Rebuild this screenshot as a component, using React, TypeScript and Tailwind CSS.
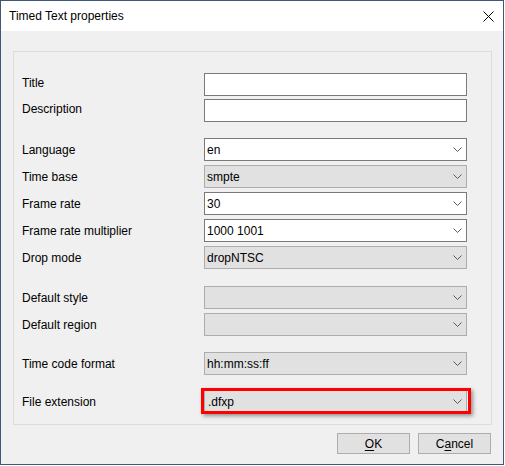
import type { ReactNode } from "react";

const FONT = { fontFamily: '"Liberation Sans", Arial, sans-serif' };

type FieldKind = "text" | "combo" | "readonly";

interface Field {
  label: string;
  kind: FieldKind;
  value?: string;
}

// Sections of the group box, spacing between them taken from the dialog
const SECTIONS: { gapTop: number; fields: Field[]; tight?: boolean }[] = [
  {
    gapTop: 21,
    tight: true,
    fields: [
      { label: "Title", kind: "text" },
      { label: "Description", kind: "text" },
    ],
  },
  {
    gapTop: 16,
    fields: [
      { label: "Language", kind: "combo", value: "en" },
      { label: "Time base", kind: "readonly", value: "smpte" },
      { label: "Frame rate", kind: "combo", value: "30" },
      { label: "Frame rate multiplier", kind: "combo", value: "1000 1001" },
      { label: "Drop mode", kind: "readonly", value: "dropNTSC" },
    ],
  },
  {
    gapTop: 17,
    fields: [
      { label: "Default style", kind: "readonly" },
      { label: "Default region", kind: "readonly" },
    ],
  },
  {
    gapTop: 16,
    fields: [{ label: "Time code format", kind: "readonly", value: "hh:mm:ss:ff" }],
  },
];

function Chevron() {
  return (
    <svg width="9" height="5" viewBox="0 0 9 5" className="block">
      <polyline points="0.5,0.5 4.5,4.5 8.5,0.5" fill="none" stroke="#5a5a5a" strokeWidth="1" />
    </svg>
  );
}

function Control({ kind, value }: { kind: FieldKind; value?: string }) {
  if (kind === "text") {
    return <div className="h-[23px] w-[263px] border border-[#7a7a7a] bg-white" />;
  }
  const box =
    kind === "combo"
      ? "border-[#7a7a7a] bg-white"
      : "border-[#adadad] bg-[#e1e1e1]";
  return (
    <div className={`flex h-[23px] w-[263px] items-center border ${box}`}>
      <span className="flex-1 pl-[2px] text-[12px] leading-none text-black">{value}</span>
      <span className="flex w-[17px] justify-center pr-[1px]">
        <Chevron />
      </span>
    </div>
  );
}

function Row({ label, raised, children }: { label: string; raised?: boolean; children: ReactNode }) {
  return (
    <div className="flex items-center">
      <span
        className={`w-[182px] text-[12px] leading-none text-black ${raised ? "-translate-y-[2px]" : ""}`}
      >
        {label}
      </span>
      {children}
    </div>
  );
}

function Button({ children }: { children: ReactNode }) {
  return (
    <div className="flex h-[21px] w-[73px] items-center justify-center border border-[#adadad] bg-[#e1e1e1] text-[12px] leading-none text-black">
      {children}
    </div>
  );
}

export default function App() {
  return (
    <div className="h-[466px] w-[505px] bg-white" style={FONT}>
      <div className="flex h-[465px] w-[504px] flex-col border border-[#3c5a78]">
        {/* Title bar */}
        <div className="flex h-[30px] items-center justify-between bg-white pl-[8px] pr-[9px]">
          <span className="text-[12px] text-black">Timed Text properties</span>
          <svg width="11" height="11" viewBox="0 0 11 11">
            <path d="M0.5 0.5 L10.5 10.5 M10.5 0.5 L0.5 10.5" stroke="#000" strokeWidth="1" />
          </svg>
        </div>

        {/* Body */}
        <div className="flex flex-1 flex-col bg-[#f0f0f0] px-[12px] pt-[20px]">
          <div className="flex h-[374px] w-[479px] flex-col border border-[#dcdcdc] pl-[8px]">
            {SECTIONS.map((section, i) => (
              <div
                key={i}
                className={`flex flex-col ${section.tight ? "gap-[3px]" : "gap-[4px]"}`}
                style={{ marginTop: section.gapTop }}
              >
                {section.fields.map((f) => (
                  <Row key={f.label} label={f.label} raised={section.tight}>
                    <Control kind={f.kind} value={f.value} />
                  </Row>
                ))}
              </div>
            ))}

            {/* File extension, highlighted */}
            <div className="mt-[15px]">
              <Row label="File extension">
                <div className="relative">
                  <div className="flex h-[23px] w-[263px] items-center border border-[#adadad] bg-[#e1e1e1]">
                    <span className="flex-1 pl-[3px] text-[12px] leading-none text-black">.dfxp</span>
                    <span className="flex w-[17px] justify-center pr-[1px]">
                      <Chevron />
                    </span>
                  </div>
                  <div className="pointer-events-none absolute left-[-3px] top-[-2px] h-[26px] w-[270px] border-[3px] border-[#ff0000] shadow-[2px_2px_4px_rgba(0,0,0,0.4)]" />
                </div>
              </Row>
            </div>
          </div>

          {/* Buttons */}
          <div className="mt-[8px] flex justify-end gap-[8px]">
            <Button>
              <span className="underline underline-offset-2">O</span>K
            </Button>
            <Button>
              C<span className="underline underline-offset-2">a</span>ncel
            </Button>
          </div>
        </div>
      </div>
    </div>
  );
}
